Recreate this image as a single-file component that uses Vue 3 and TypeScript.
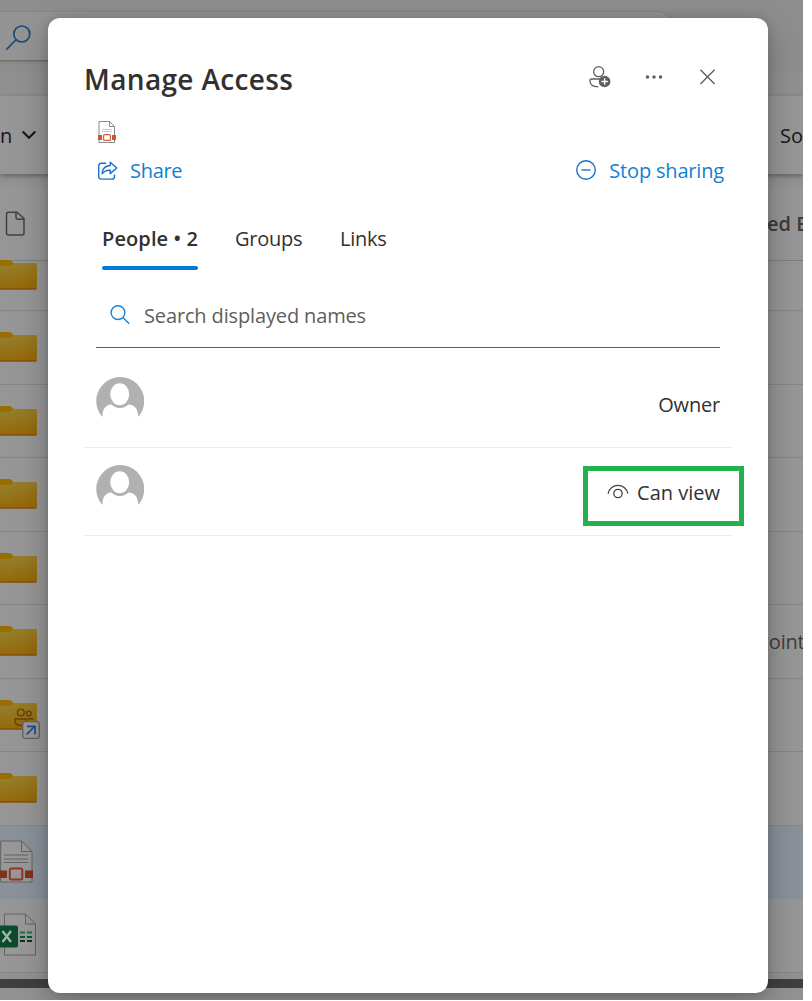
<script setup lang="ts">
interface Row {
  height: number
  icon: 'folder' | 'shared' | 'ppt' | 'xls'
  note?: string
  selected?: boolean
}

const rows: Row[] = [
  { height: 50, icon: 'folder' },
  { height: 74, icon: 'folder' },
  { height: 73, icon: 'folder' },
  { height: 74, icon: 'folder' },
  { height: 73, icon: 'folder' },
  { height: 74, icon: 'folder', note: 'Point' },
  { height: 73, icon: 'shared' },
  { height: 74, icon: 'folder' },
  { height: 73, icon: 'ppt', selected: true },
  { height: 74, icon: 'xls' },
]
const people = [
  { role: 'Owner', editable: false },
  { role: 'Can view', editable: true },
]
</script>

<template>
  <div class="stage">
    <div class="page">
      <div class="topbar">
        <div class="site-search">
          <svg width="34" height="48" viewBox="0 0 34 48" fill="none" stroke="#17497c" stroke-width="1.7">
            <circle cx="21.8" cy="22" r="8" />
            <path d="M15.8 28 6.3 37.6" />
          </svg>
        </div>
      </div>
      <div class="gap"></div>
      <div class="commands">
        <span class="cmd-left">n</span>
        <svg class="chevron" width="16" height="12" viewBox="0 0 16 12" fill="none" stroke="#161616" stroke-width="2.1"><path d="m1.700 2.500 6.300 6.200 6.300-6.200" /></svg>
        <span class="cmd-right">So</span>
      </div>
      <div class="list">
        <div class="head">
          <svg width="22" height="28" viewBox="0 0 22 28" fill="none" stroke="#414141" stroke-width="1.5" stroke-linejoin="round">
            <path d="M8.500 2.200H17l7 6.300V23q0 2-2 2H8.500q-2 0-2-2V4.200q0-2 2-2ZM16 2.500v4.800q0 2 2 2h6" />
          </svg>
          <span class="head-right">ed B</span>
        </div>
        <div v-for="(r, i) in rows" :key="i" class="row" :class="{ selected: r.selected }" :style="{ height: r.height + 'px' }">
          <svg v-if="r.icon === 'folder' || r.icon === 'shared'" class="file-icon" width="42" height="50" viewBox="0 0 42 50">
            <defs>
              <linearGradient :id="'f' + i" x1="0" y1="0" x2="0.25" y2="1">
                <stop offset="0" stop-color="#958130" />
                <stop offset="1" stop-color="#946909" />
              </linearGradient>
            </defs>
            <path d="M0 0h10q1.700.4 4.200 4-1.500 2.500-3.200 4H0Z" fill="#966f00" />
            <path d="M0 6h9.500q2 0 4-3H36q1 0 1 1.200V28q0 1.500-1.500 1.500H0Z" :fill="`url(#f${i})`" />
            <path d="M0 29h36.300" stroke="#853f0b" stroke-width="1.200" />
            <g v-if="r.icon === 'shared'">
              <g fill="none" stroke="#6b3e08" stroke-width="1.400">
                <circle cx="20.800" cy="12.500" r="3.400" />
                <circle cx="28.800" cy="13.500" r="2.400" />
                <path d="M15 19h11.500v3q-1 3.500-5.500 3.500-6 0-6-4.500Zm13-.3h4.500V20" />
              </g>
              <rect x="22.700" y="21.700" width="16.600" height="16.600" rx="2.500" fill="#989898" stroke="#626262" stroke-width="1.300" />
              <path d="m26.500 34.500 8-8M27 26.300h8v8" fill="none" stroke="#174f8a" stroke-width="1.700" />
            </g>
          </svg>
          <svg v-else-if="r.icon === 'ppt'" class="ppt-icon" width="35" height="44" viewBox="0 0 35 44">
            <path d="M.700 1h20.800L32 11.500V42H.700Z" fill="#989898" stroke="#626262" />
            <path d="M21.500 1v10.500H32M4 15h24M4 19h24M4 22.500h24" fill="none" stroke="#626262" />
            <path d="M0 30.500h7v7.500H0Zm25 0h8v7.500h-8Z" fill="#82301d" />
            <rect x="9.800" y="28.500" width="12.500" height="11" rx="1.500" fill="#989898" stroke="#903722" stroke-width="2" />
          </svg>
          <svg v-else class="xls-icon" width="38" height="44" viewBox="0 0 38 44">
            <path d="M4.500 1h21L35.500 11v31h-31Z" fill="#989898" stroke="#626262" />
            <path d="M25.500 1v10h10" fill="none" stroke="#626262" />
            <path d="M0 12.500h16q2 0 2 2v18q0 2-2 2H0Z" fill="#0b4a2b" />
            <path d="m2.500 18 8.500 11M11 18 2.500 29" stroke="#a3b4aa" stroke-width="2.300" fill="none" />
            <path d="M20 19.500h5m2 0h5" stroke="#14744a" stroke-width="2" />
            <path d="M20 24h5m2 0h5" stroke="#0d5533" stroke-width="2" />
            <path d="M20 28h5m2 0h5" stroke="#0c3421" stroke-width="2" />
          </svg>
          <span v-if="r.note" class="note">{{ r.note }}</span>
        </div>
      </div>
      <div class="scrollbar"></div>
    </div>

    <section class="dialog">
      <header>
        <h1>Manage Access</h1>
        <div class="tools">
          <svg width="24" height="24" viewBox="0 0 24 24">
            <g fill="none" stroke="#605e5c" stroke-width="1.300">
              <circle cx="10.700" cy="6.700" r="5" />
              <path d="M12 14H3.500q-1.600 0-1.600 1.600 0 6.200 8.300 6.200" />
            </g>
            <circle cx="16.600" cy="16.500" r="5.800" fill="#605e5c" />
            <path d="M16.600 13.300v6.400m-3.200-3.200h6.400" stroke="#fff" stroke-width="1.300" />
          </svg>
          <svg width="24" height="24" viewBox="0 0 24 24" fill="#605e5c"><circle cx="5.500" cy="12" r="1.750" /><circle cx="12" cy="12" r="1.750" /><circle cx="18.500" cy="12" r="1.750" /></svg>
          <svg width="24" height="24" viewBox="0 0 24 24" fill="none" stroke="#605e5c" stroke-width="1.350"><path d="m4.400 4.700 14.200 14.200m0-14.200L4.400 18.900" /></svg>
        </div>
      </header>
      <svg class="doc" width="20" height="24" viewBox="0 0 20 24">
        <path d="M2 1.500h10.500l5 5V22.500H2Z" fill="#fff" stroke="#8a8a8a" />
        <path d="M12.500 1.500v5h5" fill="none" stroke="#8a8a8a" />
        <path d="M5 9.500h10M5 11.500h10" stroke="#ccc" />
        <path d="M1 15h4v5H1Zm14 0h4v5h-4Z" fill="#d35230" />
        <rect x="6.600" y="14.600" width="6.800" height="5.800" rx="1" fill="#fff" stroke="#d9603f" stroke-width="1.200" />
      </svg>
      <div class="actions">
        <button class="share">
          <svg width="22" height="22" viewBox="0 0 22 22" fill="none" stroke="#1873c7" stroke-width="1.400" stroke-linejoin="round">
            <path d="M9 3.300H4.500Q1.700 3.300 1.700 6v10.500q0 2.600 2.800 2.600h10.300q2.700 0 2.700-2.700v-2" />
            <path d="M13.200 2.200 19.700 8l-6.500 5.600v-3.300q-5-.4-8.100 3.500.4-7.800 8.100-8.300Z" />
          </svg>
          <span>Share</span>
        </button>
        <button class="stop">
          <svg width="22" height="22" viewBox="0 0 22 22" fill="none" stroke="#1873c7" stroke-width="1.400"><circle cx="11" cy="11" r="9.300" /><path d="M6.500 11h9" /></svg>
          <span>Stop sharing</span>
        </button>
      </div>
      <nav>
        <span class="tab active">People • 2</span>
        <span class="tab groups">Groups</span>
        <span class="tab links">Links</span>
      </nav>
      <div class="search">
        <svg width="22" height="22" viewBox="0 0 22 22" fill="none" stroke="#1683d8" stroke-width="1.400"><circle cx="9" cy="8.600" r="6.900" /><path d="m13.900 13.500 6.300 6.200" /></svg>
        <span>Search displayed names</span>
      </div>
      <div v-for="p in people" :key="p.role" class="person">
        <svg width="48" height="48" viewBox="0 0 48 48">
          <path d="M6.300 40A24 24 0 1 1 42.200 40Q42 28 32.500 27.500 28.500 31 24 31t-8.500-3.500Q6.500 28 6.300 40Z" fill="#b1b1b1" />
          <ellipse cx="23.700" cy="17.300" rx="9.500" ry="11" fill="#fff" />
        </svg>
        <div class="role" :class="{ marked: p.editable }">
          <svg v-if="p.editable" width="24" height="22" viewBox="0 0 24 22" fill="none" stroke="#424242" stroke-width="1.300"><path d="M2.100 12.700C4.200 1.600 19.700 1.600 21.900 12.700" /><circle cx="12" cy="12.500" r="4.200" /></svg>
          <span>{{ p.role }}</span>
        </div>
      </div>
    </section>
  </div>
</template>

<style>
body { margin: 0; background: #fff; }
</style>

<style scoped>
* { box-sizing: border-box; }
.stage { position: relative; width: 803px; height: 1000px; overflow: hidden; font-family: "Open Sans", "Noto Sans", sans-serif; font-size: 20px; color: #323130; }
.page { display: flex; flex-direction: column; height: 1000px; background: #929292; }
.topbar { height: 72px; padding-top: 12px; background: #8e8e8e; }
.site-search { width: 676px; height: 48px; background: #949494; border-radius: 0 20px 20px 0; box-shadow: 0 1px 3px #0005; }
.gap { height: 24px; background: #909090; }
.commands { display: flex; align-items: center; height: 78px; background: #969696; box-shadow: 0 2px 5px #0005; color: #161616; z-index: 1; }
.cmd-left { width: 22px; }
.cmd-right { margin-left: 743px; }
.chevron { flex: none; }
.list { margin-top: 13px; background: #969696; }
.head { display: flex; align-items: center; height: 74px; border-bottom: 1px solid #7d7d7d; font-weight: 600; color: #3c3c3c; }
.head svg { overflow: visible; flex: none; }
.head-right { margin-left: 745px; white-space: nowrap; }
.row { display: flex; align-items: flex-start; border-bottom: 1px solid #868686; }
.row.selected { background: #8a9199; border-color: #8a9199; }
.row svg { flex: none; overflow: visible; }
.row .file-icon { margin-top: 21px; }
.row:nth-child(2) .file-icon { margin-top: -1px; }
.ppt-icon { margin-top: 14px; }
.xls-icon { margin-top: 14px; }
.note { margin: 23px 0 0 715px; color: #3c3c3c; letter-spacing: -0.2px; }
.file-icon + .note { margin-left: 715px; }
.scrollbar { height: 9px; margin-top: 6px; background: #3f3f3f; }
.dialog { position: absolute; left: 48px; top: 18px; width: 720px; height: 975px; padding: 0 36px; border-radius: 12px; background: #fff; box-shadow: 0 10px 32px #0004, 0 0 10px #0002; z-index: 2; }
header { display: flex; justify-content: space-between; height: 102px; padding-top: 40px; }
h1 { margin: 0; font-size: 28px; font-weight: 600; line-height: 42px; letter-spacing: 0.35px; white-space: nowrap; }
.tools { display: flex; gap: 30px; padding: 7px 12px 0 0; }
.doc { display: block; margin-left: 13px; }
.actions { display: flex; justify-content: space-between; height: 54px; padding: 11px 8px 0 13px; }
button { display: flex; align-items: flex-start; padding: 0; border: 0; background: none; font: inherit; line-height: 32px; color: #0f7fd6; letter-spacing: -0.18px; }
button svg { margin-top: 4px; }
.share svg { margin-top: 5px; }
.share span { margin-left: 11px; letter-spacing: -0.3px; }
.stop span { margin-left: 12px; }
nav { display: flex; height: 74px; padding: 22px 0 0 18px; line-height: 38px; letter-spacing: -0.25px; }
.tab { height: 50px; white-space: nowrap; }
.active { width: 96px; font-weight: 600; letter-spacing: 0.1px; position: relative; }
.active::after { content: ""; position: absolute; left: 0; right: 0; bottom: 0; height: 4px; border-radius: 2px; background: #0078d4; }
.groups { margin-left: 37px; width: 68px; }
.links { margin-left: 37px; }
.search { display: flex; width: 624px; height: 58px; margin: 18px 0 0 12px; padding-left: 13px; border-bottom: 1px solid #605e5c; line-height: 52px; color: #605e5c; letter-spacing: -0.14px; }
.search svg { margin-top: 14px; }
.search span { margin-left: 13px; }
.person { display: flex; justify-content: space-between; width: 648px; height: 88px; padding: 17px 12px 0; border-bottom: 1px solid #ededed; }
.search + .person { height: 100px; padding-top: 29px; letter-spacing: -0.2px; }
.role { display: flex; height: 56px; line-height: 56px; }
.marked { width: 161px; height: 60px; margin: 1px -24px 0 0; padding: 0 19px 0 18px; border: 5px solid #22b14c; line-height: 44px; justify-content: flex-end; }
.marked svg { margin: 10px 7px 0 0; }
</style>
